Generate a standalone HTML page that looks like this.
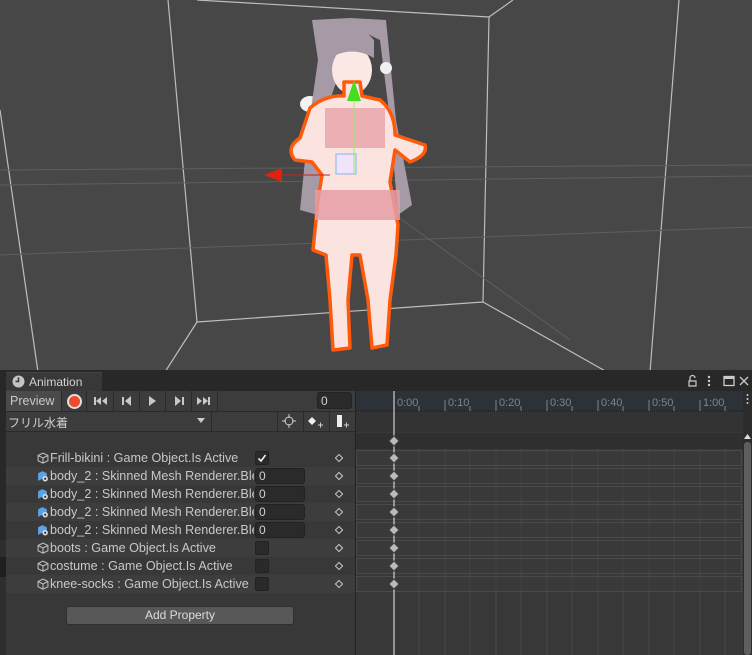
<!DOCTYPE html>
<html><head><meta charset="utf-8"><style>
*{margin:0;padding:0;box-sizing:border-box}
body{width:752px;height:655px;overflow:hidden;background:#474747;font-family:"Liberation Sans","Noto Sans CJK JP",sans-serif;font-size:12px;color:#c4c4c4;position:relative}
.a{position:absolute}
.row{position:absolute;left:6px;width:349px;height:18px}
.row .t{position:absolute;left:44px;top:2px;white-space:nowrap;width:204px;overflow:hidden;color:#c8c8c8;font-size:12.6px}
.row .ic{position:absolute;left:31px;top:3px;width:12px;height:12px}
.row .kd{position:absolute;left:330px;top:6px;width:6px;height:6px;border:1px solid #ccc;transform:rotate(45deg)}
.cb{position:absolute;left:249px;top:2px;width:14px;height:14px;background:#2a2a2a;border:1px solid #222;border-radius:2px}
.num{position:absolute;left:249px;top:1px;width:50px;height:16px;background:#2a2a2a;border:1px solid #212121;border-radius:3px;padding-left:3px;color:#d0d0d0;line-height:14px}
.tb{position:absolute;top:391px;height:20px;border-right:1px solid #2a2a2a;background:#3c3c3c}
</style></head><body>
<svg class="a" style="left:0;top:0" width="752" height="372">
<rect width="752" height="372" fill="#474747"/>
<g stroke="#bdbdbd" stroke-width="1.2" fill="none">
<line x1="168" y1="0" x2="197" y2="322"/>
<line x1="197" y1="0" x2="489" y2="17"/>
<line x1="489" y1="17" x2="483" y2="302"/>
<line x1="197" y1="322" x2="483" y2="302"/>
<line x1="489" y1="17" x2="513" y2="0"/>
<line x1="679" y1="0" x2="650" y2="372"/>
<line x1="0" y1="110" x2="38" y2="372"/>
<line x1="197" y1="322" x2="165" y2="372"/>
<line x1="483" y1="302" x2="607" y2="372"/>
</g>
<g stroke="#5e5e5e" stroke-width="1" fill="none">
<line x1="0" y1="255" x2="752" y2="227"/>
<line x1="0" y1="185" x2="752" y2="176"/>
<line x1="0" y1="170" x2="752" y2="165"/>
<line x1="398" y1="217" x2="570" y2="340"/>
</g>
<g>
<ellipse cx="310" cy="104" rx="10" ry="8" fill="#f2f2f2"/>
<path d="M312 20 L318 60 L308 130 L300 210 L318 215 L330 100 L355 28 L380 40 L390 120 L398 215 L412 205 L396 120 L386 20 L350 18 Z" fill="#a59aa5"/>
<circle cx="386" cy="68" r="6" fill="#f0f0f0"/>
<ellipse cx="352" cy="70" rx="20" ry="24" fill="#fbe8e4"/>
<path d="M330 40 Q352 15 374 40 L374 58 Q352 45 330 58 Z" fill="#a59aa5"/>
<path d="M344 82 L360 82 L362 96 L380 100 Q395 112 395 135 L425 145 Q428 155 410 162 L395 150 L390 182 L398 225 L396 255 L390 300 L387 345 L372 348 L368 300 L360 255 L352 255 L348 300 L350 348 L333 350 L330 300 L326 255 L313 250 L318 200 L322 175 L312 162 L295 160 Q285 148 300 138 L310 108 Q325 95 344 96 Z" fill="#fbe3df" stroke="#ff5a0a" stroke-width="3.5" stroke-linejoin="round"/>
<rect x="325" y="108" width="60" height="40" fill="#e9a7ad" opacity=".85"/>
<rect x="315" y="190" width="85" height="30" fill="#e59ea5" opacity=".85"/>
<rect x="336" y="154" width="20" height="20" fill="#f1e4f8" stroke="#86b6ee"/>
<line x1="354" y1="100" x2="354" y2="174" stroke="#8ef06a"/>
<polygon points="354,80 347,101 361,101" fill="#44dd22"/>
<line x1="280" y1="175" x2="330" y2="175" stroke="#c82020"/>
<polygon points="264,175 282,168 282,182" fill="#dd2211"/>
</g>
</svg>

<div class="a" style="left:0;top:370px;width:752px;height:285px;background:#282828"></div>
<div class="a" style="left:6px;top:372px;width:96px;height:20px;background:#383838;border-top:1px solid #444"></div>
<svg class="a" style="left:12px;top:375px" width="13" height="13"><circle cx="6.5" cy="6.5" r="6" fill="#c4c4c4"/><path d="M6.5 2.5V6.5H3.5" stroke="#383838" stroke-width="1.6" fill="none"/></svg>
<div class="a" style="left:29px;top:375px;color:#d2d2d2">Animation</div>
<svg class="a" style="left:686px;top:374px" width="66" height="14"><path d="M3 7h7v5H3z M4 7V4a2.5 2.5 0 0 1 5 0" stroke="#ccc" fill="none" stroke-width="1.2"/><circle cx="23" cy="3" r="1.2" fill="#ccc"/><circle cx="23" cy="7" r="1.2" fill="#ccc"/><circle cx="23" cy="11" r="1.2" fill="#ccc"/><rect x="38" y="2.5" width="10" height="9" stroke="#ccc" fill="none" stroke-width="1.3"/><line x1="38" y1="4" x2="48" y2="4" stroke="#ccc" stroke-width="2"/><path d="M54 3l8 8M62 3l-8 8" stroke="#ccc" stroke-width="1.3"/></svg>

<div class="a" style="left:6px;top:391px;width:349px;height:264px;background:#383838"></div>
<div class="a" style="left:0;top:540px;width:6px;height:115px;background:#2e2e2e"></div>
<div class="a" style="left:0;top:557px;width:6px;height:20px;background:#1f1f1f"></div>
<div class="tb" style="left:6px;width:56px;background:#4a4a4a;color:#c8c8c8;padding:3px 0 0 4px;font-size:12.5px">Preview</div>
<div class="tb" style="left:62px;width:25px"></div>
<div class="a" style="left:67px;top:394px;width:15px;height:15px;border-radius:50%;background:#e0e0e0"></div>
<div class="a" style="left:69px;top:396px;width:11px;height:11px;border-radius:50%;background:#ec4b2c"></div>
<div class="tb" style="left:87px;width:27px"></div>
<div class="tb" style="left:114px;width:26px"></div>
<div class="tb" style="left:140px;width:26px"></div>
<div class="tb" style="left:166px;width:26px"></div>
<div class="tb" style="left:192px;width:26px"></div>
<div class="tb" style="left:218px;width:137px;border:none"></div>
<svg class="a" style="left:87px;top:391px" width="131" height="20" fill="#c8c8c8"><rect x="7" y="6" width="2" height="8"/><polygon points="14,6 9,10 14,14"/><polygon points="20,6 15,10 20,14"/><rect x="35" y="6" width="2" height="8"/><polygon points="44,5 38,10 44,15"/><polygon points="62,5 69,10 62,15"/><polygon points="88,5 94,10 88,15"/><rect x="95" y="6" width="2" height="8"/><polygon points="110,6 115,10 110,14"/><polygon points="116,6 121,10 116,14"/><rect x="121" y="6" width="2" height="8"/></svg>
<div class="a" style="left:317px;top:392px;width:35px;height:17px;background:#2a2a2a;border:1px solid #222;border-radius:3px;padding:1px 0 0 3px;color:#d0d0d0">0</div>
<div class="a" style="left:6px;top:411px;width:349px;height:21px;background:#3c3c3c;border-top:1px solid #2a2a2a;border-bottom:1px solid #2a2a2a"></div>
<div class="a" style="left:8px;top:414px;color:#d0d0d0">フリル水着</div>
<div class="a" style="left:197px;top:418px;width:0;height:0;border-left:4px solid transparent;border-right:4px solid transparent;border-top:5px solid #ccc"></div>
<div class="a" style="left:211px;top:411px;width:1px;height:21px;background:#2a2a2a"></div>
<div class="a" style="left:277px;top:411px;width:1px;height:21px;background:#2a2a2a"></div>
<div class="a" style="left:303px;top:411px;width:1px;height:21px;background:#2a2a2a"></div>
<div class="a" style="left:329px;top:411px;width:1px;height:21px;background:#2a2a2a"></div>
<svg class="a" style="left:280px;top:413px" width="75" height="18"><circle cx="9" cy="8" r="4" stroke="#ccc" fill="none"/><path d="M9 1v4M9 11v4M2 8h4M12 8h4" stroke="#ccc"/><polygon points="32,4 36,8 32,12 28,8" fill="#eee"/><path d="M38 12h5M40.5 9.5v5" stroke="#ccc"/><rect x="57" y="2" width="5" height="12" fill="#eee"/><path d="M64 12h5M66.5 9.5v5" stroke="#ccc"/></svg>

<div class="row" style="top:449px;background:#383838"><svg class="ic" viewBox="0 0 11 11"><path d="M5.5 1L10 3.2V8L5.5 10.2 1 8V3.2Z M1 3.2L5.5 5.5 10 3.2 M5.5 5.5V10.2" stroke="#bbb" fill="none"/></svg><div class="t">Frill-bikini : Game Object.Is Active</div><div class="cb"><svg width="12" height="12" style="position:absolute;left:0;top:0"><path d="M2.5 6.5L5 9 9.5 3" stroke="#eee" stroke-width="1.6" fill="none"/></svg></div><div class="kd"></div></div>
<div class="row" style="top:467px;background:#3d3d3d"><svg class="ic" viewBox="0 0 11 11"><path d="M1 10L1 3 5 1 9 3 9 6Z" fill="#5aa3e6"/><circle cx="7.5" cy="8" r="2.5" fill="#ddd"/><circle cx="7.5" cy="8" r="1" fill="#333"/></svg><div class="t">body_2 : Skinned Mesh Renderer.Blendshape</div><div class="num">0</div><div class="kd"></div></div>
<div class="row" style="top:485px;background:#383838"><svg class="ic" viewBox="0 0 11 11"><path d="M1 10L1 3 5 1 9 3 9 6Z" fill="#5aa3e6"/><circle cx="7.5" cy="8" r="2.5" fill="#ddd"/><circle cx="7.5" cy="8" r="1" fill="#333"/></svg><div class="t">body_2 : Skinned Mesh Renderer.Blendshape</div><div class="num">0</div><div class="kd"></div></div>
<div class="row" style="top:503px;background:#3d3d3d"><svg class="ic" viewBox="0 0 11 11"><path d="M1 10L1 3 5 1 9 3 9 6Z" fill="#5aa3e6"/><circle cx="7.5" cy="8" r="2.5" fill="#ddd"/><circle cx="7.5" cy="8" r="1" fill="#333"/></svg><div class="t">body_2 : Skinned Mesh Renderer.Blendshape</div><div class="num">0</div><div class="kd"></div></div>
<div class="row" style="top:521px;background:#383838"><svg class="ic" viewBox="0 0 11 11"><path d="M1 10L1 3 5 1 9 3 9 6Z" fill="#5aa3e6"/><circle cx="7.5" cy="8" r="2.5" fill="#ddd"/><circle cx="7.5" cy="8" r="1" fill="#333"/></svg><div class="t">body_2 : Skinned Mesh Renderer.Blendshape</div><div class="num">0</div><div class="kd"></div></div>
<div class="row" style="top:539px;background:#3d3d3d"><svg class="ic" viewBox="0 0 11 11"><path d="M5.5 1L10 3.2V8L5.5 10.2 1 8V3.2Z M1 3.2L5.5 5.5 10 3.2 M5.5 5.5V10.2" stroke="#bbb" fill="none"/></svg><div class="t">boots : Game Object.Is Active</div><div class="cb"></div><div class="kd"></div></div>
<div class="row" style="top:557px;background:#383838"><svg class="ic" viewBox="0 0 11 11"><path d="M5.5 1L10 3.2V8L5.5 10.2 1 8V3.2Z M1 3.2L5.5 5.5 10 3.2 M5.5 5.5V10.2" stroke="#bbb" fill="none"/></svg><div class="t">costume : Game Object.Is Active</div><div class="cb"></div><div class="kd"></div></div>
<div class="row" style="top:575px;background:#3d3d3d"><svg class="ic" viewBox="0 0 11 11"><path d="M5.5 1L10 3.2V8L5.5 10.2 1 8V3.2Z M1 3.2L5.5 5.5 10 3.2 M5.5 5.5V10.2" stroke="#bbb" fill="none"/></svg><div class="t">knee-socks : Game Object.Is Active</div><div class="cb"></div><div class="kd"></div></div>
<div class="a" style="left:66px;top:606px;width:228px;height:19px;background:#585858;border:1px solid #303030;border-radius:3px;text-align:center;line-height:17px;color:#dcdcdc">Add Property</div>

<svg class="a" style="left:355px;top:391px" width="397" height="264">
<rect width="397" height="264" fill="#383838"/>
<rect x="0" y="0" width="1" height="264" fill="#232323"/>
<rect x="1" y="0" width="387" height="20" fill="#2c3237"/>
<line x1="1" y1="20" x2="388" y2="20" stroke="#111" stroke-dasharray="1 1"/>
<rect x="1" y="21" width="387" height="20" fill="#333"/>
<rect x="1" y="42" width="387" height="16" fill="#2f2f2f"/>
<g stroke="#494949">
<line x1="90" y1="58" x2="90" y2="264"/><line x1="141" y1="58" x2="141" y2="264"/><line x1="192" y1="58" x2="192" y2="264"/><line x1="243" y1="58" x2="243" y2="264"/><line x1="294" y1="58" x2="294" y2="264"/><line x1="345" y1="58" x2="345" y2="264"/>
<line x1="64" y1="58" x2="64" y2="264"/><line x1="115" y1="58" x2="115" y2="264"/><line x1="166" y1="58" x2="166" y2="264"/><line x1="217" y1="58" x2="217" y2="264"/><line x1="268" y1="58" x2="268" y2="264"/><line x1="319" y1="58" x2="319" y2="264"/><line x1="370" y1="58" x2="370" y2="264"/>
</g>
<g fill="#3a3a3a" fill-opacity=".55" stroke="#4a4a4a">
<rect x="1.5" y="59.5" width="385" height="15"/><rect x="1.5" y="77.5" width="385" height="15"/><rect x="1.5" y="95.5" width="385" height="15"/><rect x="1.5" y="113.5" width="385" height="15"/><rect x="1.5" y="131.5" width="385" height="15"/><rect x="1.5" y="149.5" width="385" height="15"/><rect x="1.5" y="167.5" width="385" height="15"/><rect x="1.5" y="185.5" width="385" height="15"/>
</g>
<g fill="#7f8489" font-size="11" font-family="Liberation Sans">
<text x="42" y="15">0:00</text><text x="93" y="15">0:10</text><text x="144" y="15">0:20</text><text x="195" y="15">0:30</text><text x="246" y="15">0:40</text><text x="297" y="15">0:50</text><text x="348" y="15">1:00</text>
</g>
<g stroke="#7f8489">
<line x1="39" y1="9" x2="39" y2="20"/><line x1="90" y1="9" x2="90" y2="20"/><line x1="141" y1="9" x2="141" y2="20"/><line x1="192" y1="9" x2="192" y2="20"/><line x1="243" y1="9" x2="243" y2="20"/><line x1="294" y1="9" x2="294" y2="20"/><line x1="345" y1="9" x2="345" y2="20"/>
<line x1="64" y1="15" x2="64" y2="20"/><line x1="115" y1="15" x2="115" y2="20"/><line x1="166" y1="15" x2="166" y2="20"/><line x1="217" y1="15" x2="217" y2="20"/><line x1="268" y1="15" x2="268" y2="20"/><line x1="319" y1="15" x2="319" y2="20"/><line x1="370" y1="15" x2="370" y2="20"/>
</g>
<line x1="39" y1="0" x2="39" y2="264" stroke="#eee"/>
<g fill="#bbb" stroke="#444">
<polygon points="39,45 44,50 39,55 34,50"/><polygon points="39,62 44,67 39,72 34,67"/><polygon points="39,80 44,85 39,90 34,85"/><polygon points="39,98 44,103 39,108 34,103"/><polygon points="39,116 44,121 39,126 34,121"/><polygon points="39,134 44,139 39,144 34,139"/><polygon points="39,152 44,157 39,162 34,157"/><polygon points="39,170 44,175 39,180 34,175"/><polygon points="39,188 44,193 39,198 34,193"/>
</g>
<rect x="388" y="0" width="9" height="264" fill="#2c2c2c"/>
<g fill="#ccc"><circle cx="392.5" cy="4" r="1"/><circle cx="392.5" cy="8" r="1"/><circle cx="392.5" cy="12" r="1"/></g>
<polygon points="392.5,43 396,48 389,48" fill="#ddd"/>
<rect x="389" y="51" width="7" height="213" rx="3" fill="#5e5e5e"/>
</svg>
</body></html>
